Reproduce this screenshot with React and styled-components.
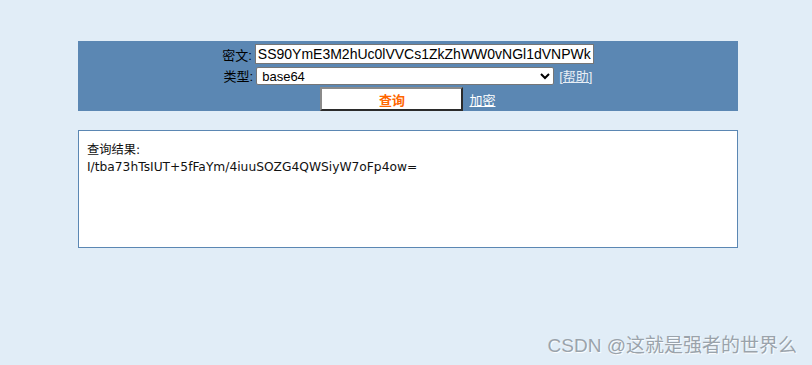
import React from "react"
import styled, { createGlobalStyle } from "styled-components"

const GlobalStyle = createGlobalStyle`
  html, body {
    margin: 0;
    padding: 0;
    background: #e1edf7;
    font-family: "Liberation Sans", Arial, "Noto Sans CJK SC", sans-serif;
  }
`

const Page = styled.div`
  width: 812px;
  height: 365px;
  padding-top: 41px;
  box-sizing: border-box;
  position: relative;
`

const Panel = styled.form`
  width: 660px;
  margin-left: 78px;
  background: #5b87b3;
  padding: 3px 0 3px;
  box-sizing: border-box;
  height: 70px;
  display: flex;
  flex-direction: column;
  align-items: center;
  gap: 2px;
`

const Row = styled.div`
  display: flex;
  align-items: center;
  gap: 3px;
  font-size: 13px;
  color: #000;
`

const Label = styled.span`
  font-size: 13px;
`

const TextInput = styled.input`
  width: 339px;
  height: 20px;
  box-sizing: border-box;
  border: 1px solid #767676;
  padding: 0 2px;
  font-family: "Liberation Sans", Arial, sans-serif;
  font-size: 14px;
  color: #000;
`

const Select = styled.select`
  width: 298px;
  height: 18px;
  box-sizing: border-box;
  border: 1px solid #767676;
  border-radius: 2px;
  padding: 0 0 0 1px;
  font-family: "Liberation Sans", Arial, sans-serif;
  font-size: 13px;
  background: #fff;
`

const HelpLink = styled.a`
  color: #e8eef5;
  text-decoration: underline;
  font-size: 13px;
  margin-left: 2px;
`

const Button = styled.button`
  width: 143px;
  height: 24px;
  background: #fff;
  border: 2px solid;
  border-color: #8a8a8a #2b2b2b #2b2b2b #8a8a8a;
  color: #ff6600;
  font-weight: bold;
  font-size: 13px;
  font-family: "Liberation Sans", Arial, "Noto Sans CJK SC", sans-serif;
  padding: 0;
`

const LinkText = styled.a`
  color: #fff;
  text-decoration: underline;
  font-size: 13px;
  margin-left: 3px;
`

const ResultBox = styled.div`
  width: 660px;
  height: 118px;
  margin: 19px 0 0 78px;
  box-sizing: border-box;
  background: #fff;
  border: 1px solid #5b87b3;
  padding: 11px 8px;
  font-family: "DejaVu Sans", Verdana, "Noto Sans CJK SC", sans-serif;
  font-size: 12.25px;
  line-height: 17px;
  color: #111;
`

const Watermark = styled.div`
  position: absolute;
  right: 15px;
  bottom: 8px;
  font-size: 19px;
  color: #9aa3ab;
  text-shadow: 1px 1px 1px #ffffff;
  font-family: "Liberation Sans", Arial, "Noto Sans CJK SC", sans-serif;
`

export default function App() {
  return (
    <Page>
      <GlobalStyle />
      <Panel onSubmit={(e) => e.preventDefault()}>
        <Row>
          <Label>密文:</Label>
          <TextInput defaultValue="SS90YmE3M2hUc0lVVCs1ZkZhWW0vNGl1dVNPWkc0UVdTaXlXN29GcDRvdz0=" />
        </Row>
        <Row>
          <Label>类型:</Label>
          <Select defaultValue="base64">
            <option value="base64">base64</option>
          </Select>
          <HelpLink href="#">[帮助]</HelpLink>
        </Row>
        <Row>
          <Button type="submit">查询</Button>
          <LinkText href="#">加密</LinkText>
        </Row>
      </Panel>
      <ResultBox>
        查询结果:
        <br />
        I/tba73hTsIUT+5fFaYm/4iuuSOZG4QWSiyW7oFp4ow=
      </ResultBox>
      <Watermark>CSDN @这就是强者的世界么</Watermark>
    </Page>
  )
}
